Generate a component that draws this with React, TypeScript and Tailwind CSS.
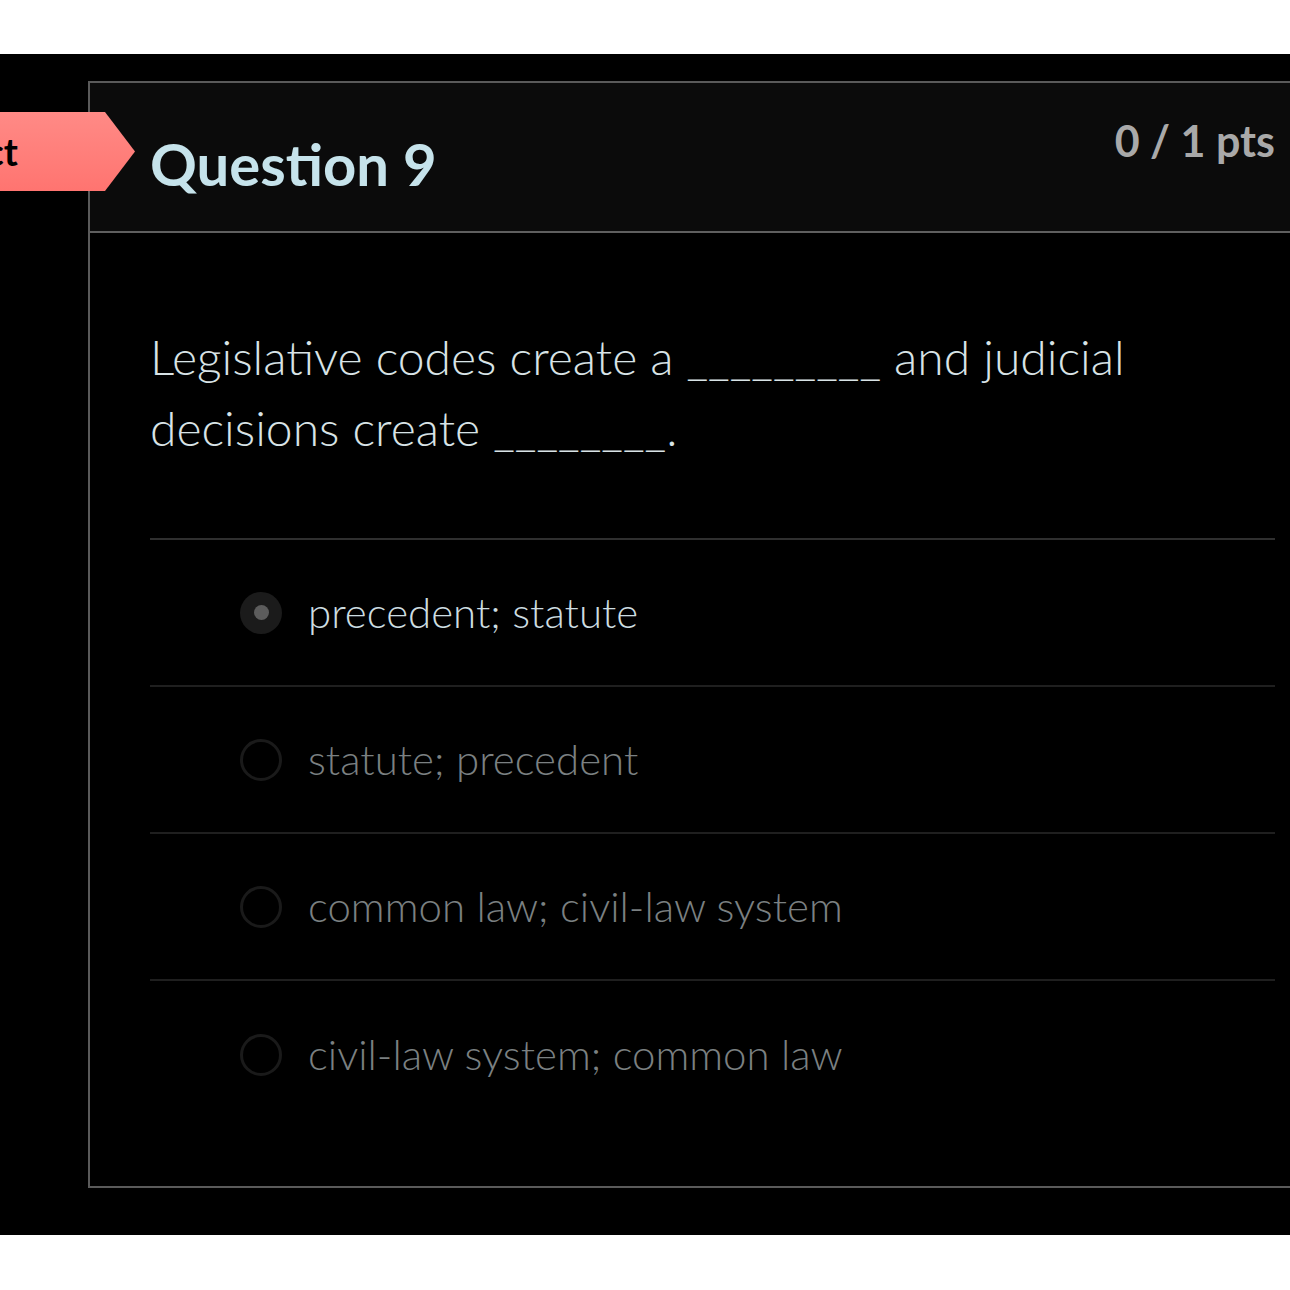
import React from "react";

const options = [
  { label: "precedent; statute", selected: true },
  { label: "statute; precedent", selected: false },
  { label: "common law; civil-law system", selected: false },
  { label: "civil-law system; common law", selected: false },
];

const Radio = ({ selected }: { selected: boolean }) =>
  selected ? (
    <div className="w-[42px] h-[42px] rounded-full bg-[#1b1b1b] flex items-center justify-center shrink-0">
      <div className="w-[15px] h-[15px] rounded-full bg-[#5c5c5c]" />
    </div>
  ) : (
    <div className="w-[42px] h-[42px] rounded-full border-[3px] border-[#1a1a1a] shrink-0" />
  );

export default function App() {
  return (
    <div
      className="min-h-screen bg-white"
      style={{ fontFamily: "Lato, 'Noto Sans', sans-serif" }}
    >
      <div className="h-[54px]" />

      <div className="relative bg-black pt-[27px] pb-[47px] pl-[88px] overflow-hidden">
        {/* status tag, cut off at the left edge */}
        <div className="absolute left-0 top-[58px] w-[135px] h-[79px] bg-gradient-to-b from-[#ff8a86] to-[#ff7470] [clip-path:polygon(0_0,105px_0,135px_50%,105px_100%,0_100%)] z-10">
          <span className="absolute right-[117px] top-[14px] text-[38px] font-bold text-black leading-[50px] whitespace-nowrap">
            Incorrect
          </span>
        </div>

        {/* card */}
        <div className="border-2 border-r-0 border-[#5a5a5a]">
          <div className="h-[150px] bg-[#0b0b0b] border-b-2 border-[#5f5f5f] flex justify-between pl-[60px] pr-[15px]">
            <h2 className="pt-[46px] text-[58px] font-bold leading-[70px] text-[#c6e3eb]">
              Question 9
            </h2>
            <div className="pt-[30px] text-[43px] font-bold leading-[56px] text-[#a9a9a9]">
              0 / 1 pts
            </div>
          </div>

          <div className="pl-[60px] pr-[15px] pt-[88px] pb-[58px]">
            <p className="text-[48px] font-light leading-[71px] text-[#d8e3e6] pr-[60px]">
              Legislative codes create a _________ and judicial decisions create
              ________.
            </p>

            <div className="mt-[75px] border-t-2 border-[#2f2f2f]">
              {options.map((opt, i) => (
                <div
                  key={opt.label}
                  className={`h-[147px] flex items-center gap-[26px] pl-[90px] ${
                    i < options.length - 1 ? "border-b-2 border-[#1f1f1f]" : ""
                  }`}
                >
                  <Radio selected={opt.selected} />
                  <span
                    className={`text-[42px] font-light ${
                      opt.selected ? "text-[#cddde1]" : "text-[#7b8082]"
                    }`}
                  >
                    {opt.label}
                  </span>
                </div>
              ))}
            </div>
          </div>
        </div>
      </div>
    </div>
  );
}
